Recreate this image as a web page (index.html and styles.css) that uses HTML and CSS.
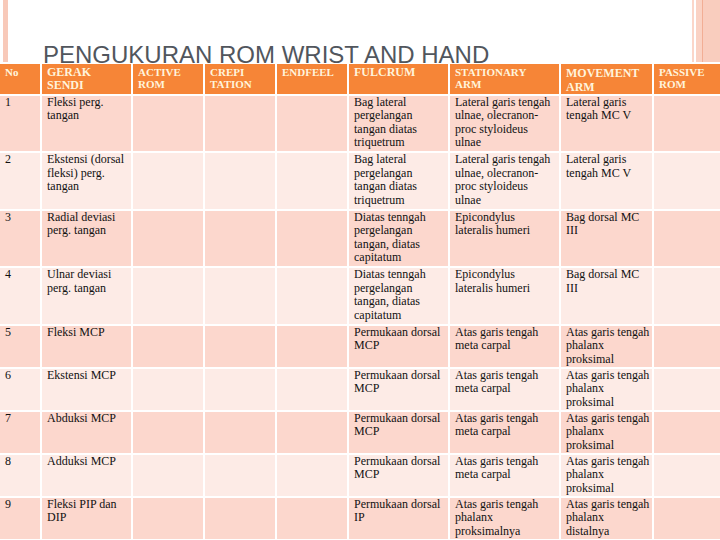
FILE: index.html
```html
<!DOCTYPE html>
<html>
<head>
<meta charset="utf-8">
<link rel="stylesheet" href="styles.css">
</head>
<body>
<div class="slide">
  <div class="top">
    <div class="strip"></div>
    <h1 class="title">PENGUKURAN ROM WRIST AND HAND</h1>
    <div class="stripes"></div>
  </div>
  <table class="rom">
    <colgroup>
      <col class="c-no"><col class="c-gerak"><col class="c-act"><col class="c-crep"><col class="c-end"><col class="c-ful"><col class="c-sta"><col class="c-mov"><col class="c-pas">
    </colgroup>
    <thead>
      <tr class="head">
        <th>No</th>
        <th class="big">GERAK<br>SENDI</th>
        <th>ACTIVE<br>ROM</th>
        <th>CREPI<br>TATION</th>
        <th>ENDFEEL</th>
        <th class="big">FULCRUM</th>
        <th>STATIONARY<br>ARM</th>
        <th class="big mov">MOVEMENT<br>ARM</th>
        <th>PASSIVE<br>ROM</th>
      </tr>
    </thead>
    <tbody>
      <tr class="tall odd">
        <td>1</td><td>Fleksi perg.<br>tangan</td><td></td><td></td><td></td>
        <td>Bag lateral<br>pergelangan<br>tangan diatas<br>triquetrum</td>
        <td>Lateral garis tengah<br>ulnae, olecranon-<br>proc styloideus<br>ulnae</td>
        <td>Lateral garis<br>tengah MC V</td><td></td>
      </tr>
      <tr class="tall even">
        <td>2</td><td>Ekstensi (dorsal<br>fleksi) perg.<br>tangan</td><td></td><td></td><td></td>
        <td>Bag lateral<br>pergelangan<br>tangan diatas<br>triquetrum</td>
        <td>Lateral garis tengah<br>ulnae, olecranon-<br>proc styloideus<br>ulnae</td>
        <td>Lateral garis<br>tengah MC V</td><td></td>
      </tr>
      <tr class="tall odd">
        <td>3</td><td>Radial deviasi<br>perg. tangan</td><td></td><td></td><td></td>
        <td>Diatas tenngah<br>pergelangan<br>tangan, diatas<br>capitatum</td>
        <td>Epicondylus<br>lateralis humeri</td>
        <td>Bag dorsal MC<br>III</td><td></td>
      </tr>
      <tr class="tall even">
        <td>4</td><td>Ulnar deviasi<br>perg. tangan</td><td></td><td></td><td></td>
        <td>Diatas tenngah<br>pergelangan<br>tangan, diatas<br>capitatum</td>
        <td>Epicondylus<br>lateralis humeri</td>
        <td>Bag dorsal MC<br>III</td><td></td>
      </tr>
      <tr class="short odd">
        <td>5</td><td>Fleksi MCP</td><td></td><td></td><td></td>
        <td>Permukaan dorsal<br>MCP</td>
        <td>Atas garis tengah<br>meta carpal</td>
        <td>Atas garis tengah<br>phalanx<br>proksimal</td><td></td>
      </tr>
      <tr class="short even">
        <td>6</td><td>Ekstensi MCP</td><td></td><td></td><td></td>
        <td>Permukaan dorsal<br>MCP</td>
        <td>Atas garis tengah<br>meta carpal</td>
        <td>Atas garis tengah<br>phalanx<br>proksimal</td><td></td>
      </tr>
      <tr class="short odd">
        <td>7</td><td>Abduksi MCP</td><td></td><td></td><td></td>
        <td>Permukaan dorsal<br>MCP</td>
        <td>Atas garis tengah<br>meta carpal</td>
        <td>Atas garis tengah<br>phalanx<br>proksimal</td><td></td>
      </tr>
      <tr class="short even">
        <td>8</td><td>Adduksi MCP</td><td></td><td></td><td></td>
        <td>Permukaan dorsal<br>MCP</td>
        <td>Atas garis tengah<br>meta carpal</td>
        <td>Atas garis tengah<br>phalanx<br>proksimal</td><td></td>
      </tr>
      <tr class="short odd">
        <td>9</td><td>Fleksi PIP dan<br>DIP</td><td></td><td></td><td></td>
        <td>Permukaan dorsal<br>IP</td>
        <td>Atas garis tengah<br>phalanx<br>proksimalnya</td>
        <td>Atas garis tengah<br>phalanx<br>distalnya</td><td></td>
      </tr>
    </tbody>
  </table>
</div>
</body>
</html>
```
FILE: styles.css
```css
* { box-sizing: border-box; }
html, body { margin: 0; padding: 0; background: #ffffff; }
.slide {
  width: 720px;
  height: 540px;
  overflow: hidden;
  background: #ffffff;
}
.top {
  display: flex;
  height: 62px;
}
.strip {
  margin-left: 3px;
  width: 5px;
  background: #f8c9b9;
}
.title {
  margin: 0 0 0 35px;
  align-self: flex-end;
  font-family: "Liberation Sans", Arial, sans-serif;
  font-weight: normal;
  font-size: 24px;
  line-height: 14px;
  color: #51565d;
  white-space: nowrap;
}
.stripes {
  margin-left: auto;
  width: 28px;
  background: linear-gradient(to right,
    #fbd6c9 0, #fbd6c9 2px,
    #ffffff 2px, #ffffff 4px,
    #fad2c4 4px, #fad2c4 10px,
    #f2ae95 10px, #f2ae95 11px,
    #f9cdbe 11px, #f9cdbe 28px);
}
.rom {
  table-layout: fixed;
  width: 724px;
  margin-left: -2px;
  border-collapse: separate;
  border-spacing: 2px;
  font-family: "Liberation Serif", "Times New Roman", serif;
}
.c-no { width: 40px; }
.c-gerak { width: 89px; }
.c-act { width: 70px; }
.c-crep { width: 70px; }
.c-end { width: 70px; }
.c-ful { width: 99px; }
.c-sta { width: 109px; }
.c-mov { width: 91px; }
.c-pas { width: 66px; }
.rom th, .rom td {
  padding: 0 0 0 5px;
  vertical-align: top;
  text-align: left;
  white-space: nowrap;
  overflow: visible;
}
.head { height: 28px; }
.rom th {
  background: #f68537;
  color: #fff4dc;
  font-weight: bold;
  font-size: 11px;
  line-height: 12px;
  padding-top: 2px;
}
.rom th.big {
  font-size: 12px;
  line-height: 13.5px;
  padding-top: 1.5px;
}
.rom th.mov { line-height: 14px; }
.rom td {
  font-size: 12px;
  line-height: 13.6px;
  color: #111111;
}
.tall { height: 55.5px; }
.short { height: 41px; }
.odd td { background: #fcd7cd; }
.even td { background: #fdebe6; }
```
